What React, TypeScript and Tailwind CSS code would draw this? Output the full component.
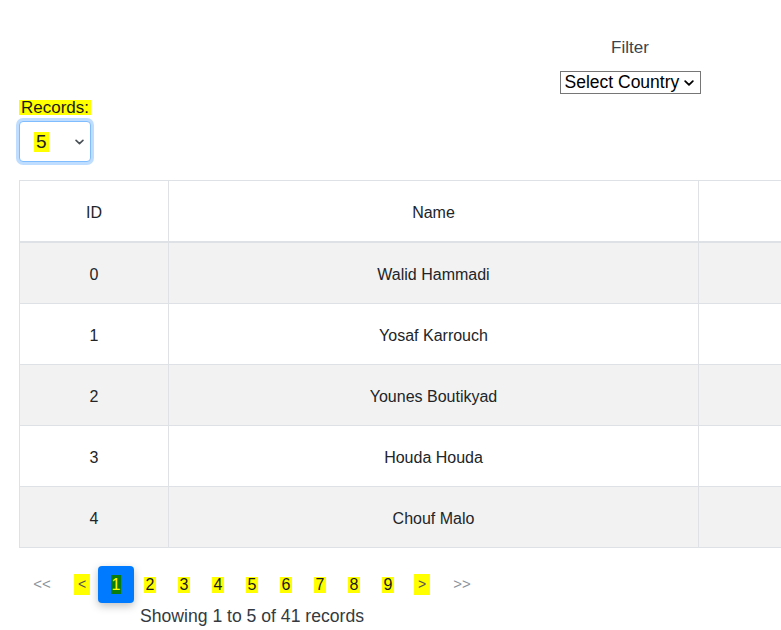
import React from 'react';

const rows = [
  { id: 0, name: 'Walid Hammadi' },
  { id: 1, name: 'Yosaf Karrouch' },
  { id: 2, name: 'Younes Boutikyad' },
  { id: 3, name: 'Houda Houda' },
  { id: 4, name: 'Chouf Malo' },
];

const pages = [2, 3, 4, 5, 6, 7, 8, 9];

const Chevron = ({ className }: { className: string }) => (
  <svg viewBox="0 0 10 6" className={className} fill="none" stroke="currentColor" strokeWidth="1.8" strokeLinecap="round" strokeLinejoin="round">
    <path d="M1.2 1.2 L5 4.8 L8.8 1.2" />
  </svg>
);

const App = () => {
  return (
    <div className="min-h-screen w-full overflow-hidden bg-white font-['Liberation_Sans',Arial,sans-serif] text-[#212529]">
      <div className="pl-[19px] pt-[38px]">
        {/* filter */}
        <div className="ml-[500px] flex w-[222px] flex-col items-center">
          <div className="text-[17px] leading-[20px] text-[#3a4350]">Filter</div>
          <div className="mt-[13px] flex h-[23px] w-[141px] items-center justify-between border border-[#767676] bg-white pl-[4px] pr-[6px] text-[17.5px] text-black">
            <span>Select Country</span>
            <Chevron className="h-[6px] w-[10px] text-black" />
          </div>
        </div>

        {/* records per page */}
        <div className="mt-[6px] text-[17px] leading-[15px]">
          <span className="inline-block h-[15px] bg-[#ffff00] px-[2px] text-[#1a1a1a]">Records:</span>
        </div>
        <div className="mt-[6px] flex h-[41px] w-[72px] items-center justify-between rounded-[4px] border border-[#80bdff] bg-white pl-[14px] pr-[6px] shadow-[0_0_0_3px_rgba(0,123,255,0.25)]">
          <span className="inline-block h-[20px] bg-[#ffff00] px-[2px] text-[19px] leading-[20px] text-[#222]">5</span>
          <Chevron className="h-[6px] w-[9px] text-[#495057]" />
        </div>

        {/* table (third column runs past the window edge) */}
        <div className="mt-[18px] w-max border-l border-t border-[#dee2e6] text-[16px]">
          <div className="grid grid-cols-[149px_530px_320px]">
            <div className="flex h-[62px] items-center justify-center border-b-2 border-r border-[#dee2e6] pt-[3px]">ID</div>
            <div className="flex h-[62px] items-center justify-center border-b-2 border-r border-[#dee2e6] pt-[3px]">Name</div>
            <div className="h-[62px] border-b-2 border-r border-[#dee2e6]" />
            {rows.map((r, i) => (
              <React.Fragment key={r.id}>
                <div className={`flex h-[61px] items-center justify-center border-b border-r border-[#dee2e6] pt-[3px] ${i % 2 === 0 ? 'bg-[#f2f2f2]' : 'bg-white'}`}>{r.id}</div>
                <div className={`flex h-[61px] items-center justify-center border-b border-r border-[#dee2e6] pt-[3px] ${i % 2 === 0 ? 'bg-[#f2f2f2]' : 'bg-white'}`}>{r.name}</div>
                <div className={`h-[61px] border-b border-r border-[#dee2e6] ${i % 2 === 0 ? 'bg-[#f2f2f2]' : 'bg-white'}`} />
              </React.Fragment>
            ))}
          </div>
        </div>

        {/* pagination */}
        <div className="mt-[18px] flex h-[37px] items-center text-[16px]">
          <div className="flex w-[46px] justify-center text-[15px] text-[#8a939c]">&lt;&lt;</div>
          <div className="flex w-[34px] justify-center">
            <span className="inline-flex h-[21px] w-[16px] items-center justify-center bg-[#ffff00] text-[14px] text-[#555]">&lt;</span>
          </div>
          <div className="-mx-px flex h-[37px] w-[36px] items-center justify-center rounded-[4px] bg-[#007bff] shadow-[0_3px_8px_rgba(0,0,0,0.25)]">
            <span className="inline-block h-[19px] bg-[#0a7d0a] px-[1px] leading-[19px] text-[#ffff00]">1</span>
          </div>
          {pages.map((p) => (
            <div key={p} className="flex w-[34px] justify-center">
              <span className="inline-block h-[16px] bg-[#ffff00] px-[1.5px] leading-[16px] text-[#1a1a1a]">{p}</span>
            </div>
          ))}
          <div className="flex w-[34px] justify-center">
            <span className="inline-flex h-[21px] w-[16px] items-center justify-center bg-[#ffff00] text-[14px] text-[#555]">&gt;</span>
          </div>
          <div className="flex w-[46px] justify-center text-[15px] text-[#8a939c]">&gt;&gt;</div>
        </div>
        <div className="ml-[121px] mt-[3px] text-[17.6px] leading-[20px] text-[#343a40]">Showing 1 to 5 of 41 records</div>
      </div>
    </div>
  );
};

export default App;
